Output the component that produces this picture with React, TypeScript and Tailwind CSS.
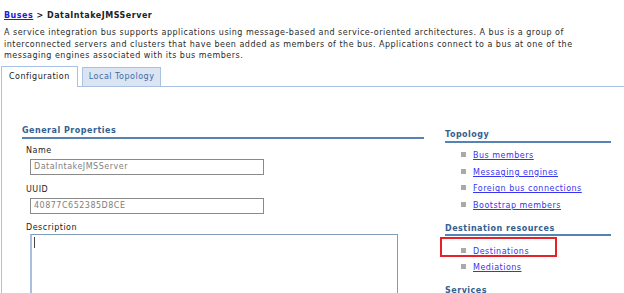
import React from 'react';

const topology = ['Bus members', 'Messaging engines', 'Foreign bus connections', 'Bootstrap members'];

function LinkItem({ label, boxed }: { label: string; boxed?: boolean }) {
  return (
    <li className="relative flex items-center h-[11px] pl-[16px]">
      <span className="w-[5px] h-[5px] bg-[#a9a9a9] mr-[7px] -mt-[3px]" />
      <a href="#" className="text-[#3535f0] underline">{label}</a>
      {boxed && (
        <span className="absolute left-[-5px] top-[-9px] w-[117px] h-[20px] border-2 border-[#e5222a] pointer-events-none" />
      )}
    </li>
  );
}

export default function App() {
  return (
    <div className="w-[624px] h-[293px] overflow-hidden bg-white text-[8px] tracking-[0.5px] text-[#222] font-['DejaVu_Sans',sans-serif]">
      {/* breadcrumb + intro */}
      <div className="px-[4px] pt-[10px]">
        <div className="leading-[11px] font-bold">
          <a href="#" className="text-[#1d1dd8] underline">Buses</a> &gt; DataIntakeJMSServer
        </div>
        <p className="mt-[6px] leading-[11.5px] text-[#2a2a2a]">
          A service integration bus supports applications using message-based and service-oriented architectures. A bus is a group of
          interconnected servers and clusters that have been added as members of the bus. Applications connect to a bus at one of the
          messaging engines associated with its bus members.
        </p>
      </div>

      {/* tabs */}
      <div className="flex items-end mt-[4px] pl-[1px]">
        <div className="h-[21px] px-[7px] flex items-center border border-b-0 border-[#a9c1e3] bg-white text-[#222]">
          Configuration
        </div>
        <div className="w-[4px] border-b border-[#a9c1e3]" />
        <div className="h-[20px] px-[6px] flex items-center border border-[#a9c1e3] bg-[#dbe4f2] text-[#3f6ba6]">
          Local Topology
        </div>
        <div className="flex-1 border-b border-[#a9c1e3]" />
      </div>

      {/* panel */}
      <div className="ml-[1px] border-l border-[#a9c1e3] flex gap-[21px] pl-[20px] pt-[38px] h-[300px]">
        <div className="w-[402px]">
          <div className="leading-[11px] font-bold text-[#34608f] border-b-2 border-[#5782b5] pb-[1px]">General Properties</div>
          <div className="pl-[4px] mt-[6px] leading-[11px]">Name</div>
          <div className="ml-[8px] mt-[3px] w-[234px] h-[16px] border border-[#8a8a8a] pl-[3px] flex items-center text-[#808080]">
            DataIntakeJMSServer
          </div>
          <div className="pl-[4px] mt-[9px] leading-[11px]">UUID</div>
          <div className="ml-[8px] mt-[3px] w-[234px] h-[16px] border border-[#8a8a8a] pl-[3px] flex items-center text-[#808080]">
            40877C652385D8CE
          </div>
          <div className="pl-[4px] mt-[8px] leading-[11px]">Description</div>
          <div className="ml-[8px] mt-[1px] w-[368px] h-[80px] border border-[#7f9db9] border-l-2 border-l-[#a7c0db] pl-[2px] pt-[2px]">
            <span className="block w-[1px] h-[11px] bg-[#444]" />
          </div>
        </div>

        <div className="w-[166px] pt-[4px]">
          <div className="leading-[11px] font-bold text-[#34608f] border-b-2 border-[#5782b5] pb-[1px]">Topology</div>
          <ul className="mt-[8px] flex flex-col gap-[5.6px]">
            {topology.map((t) => (
              <LinkItem key={t} label={t} />
            ))}
          </ul>
          <div className="mt-[12px] leading-[11px] font-bold text-[#34608f] border-b-2 border-[#5782b5]">Destination resources</div>
          <ul className="mt-[10px] flex flex-col gap-[5px]">
            <LinkItem label="Destinations" boxed />
            <LinkItem label="Mediations" />
          </ul>
          <div className="mt-[12px] leading-[11px] font-bold text-[#34608f]">Services</div>
        </div>
      </div>
    </div>
  );
}
